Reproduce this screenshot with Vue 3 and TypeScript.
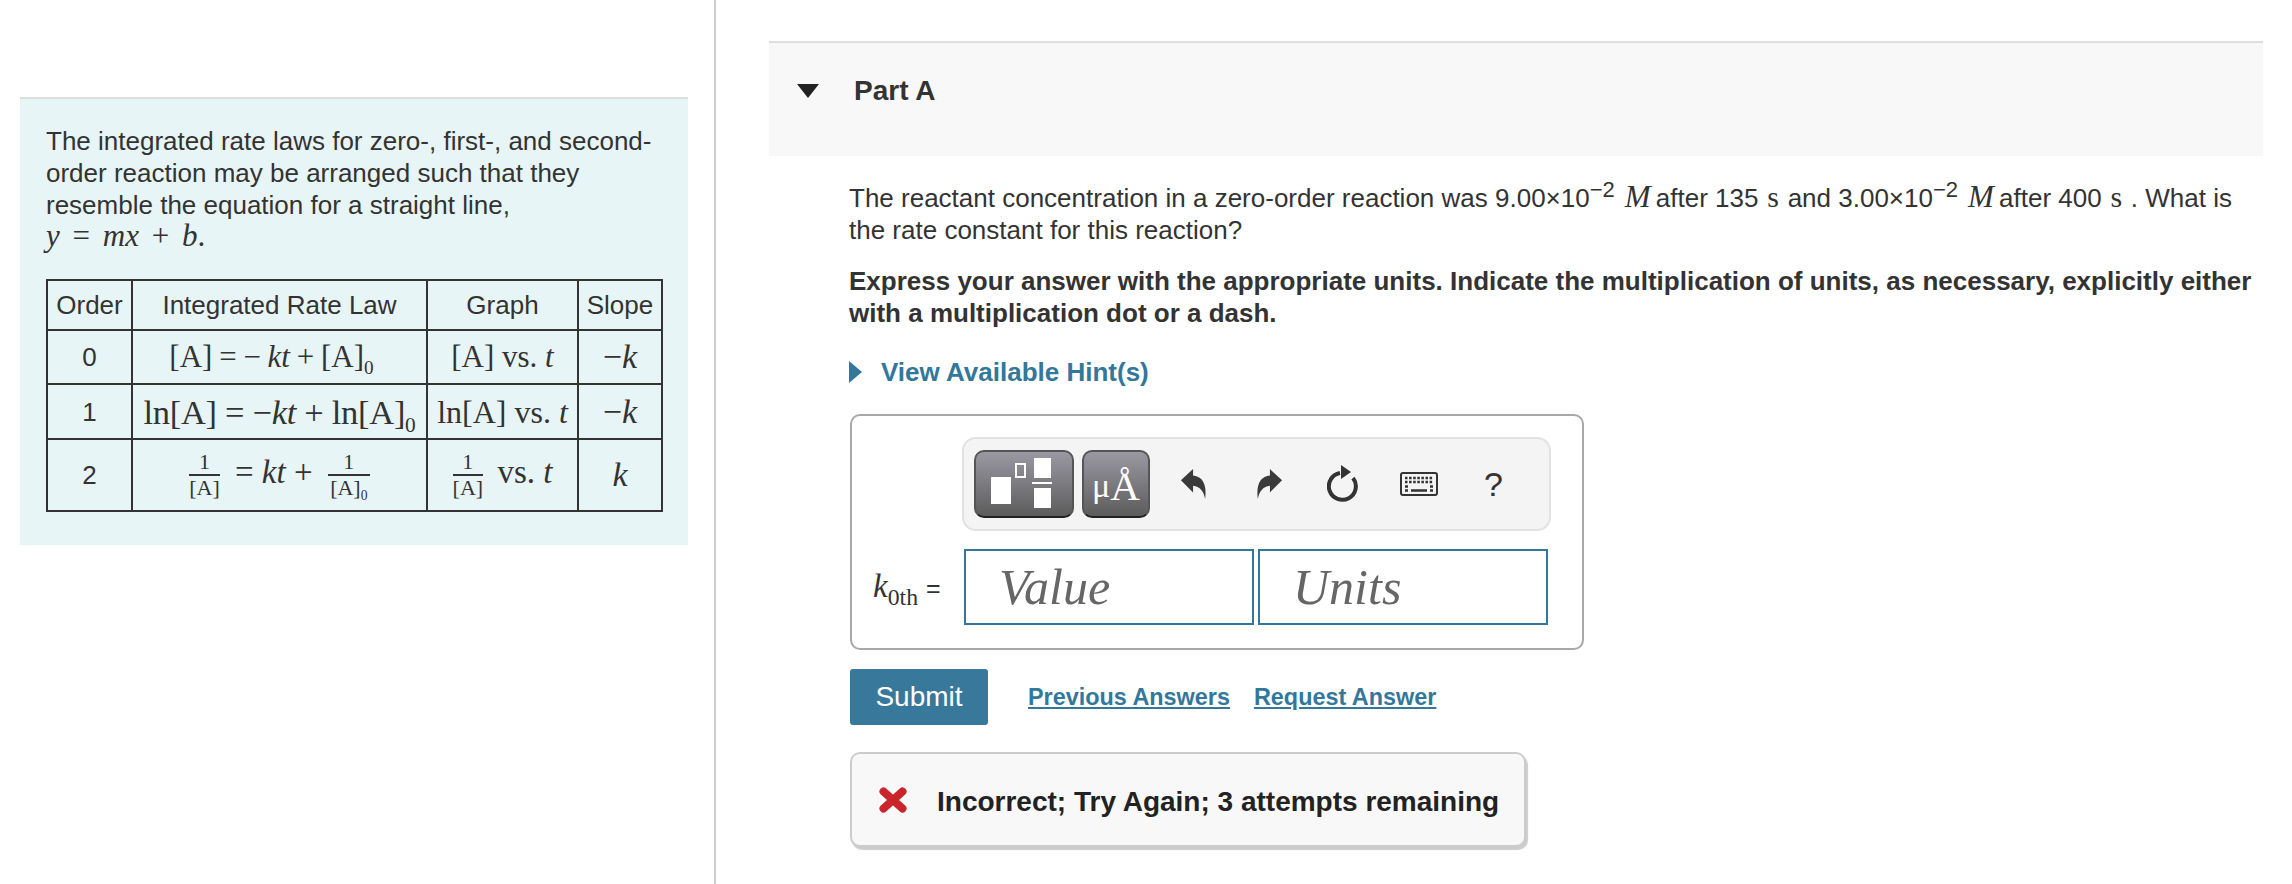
<script setup lang="ts">
const inputs = [
  { id: 'value', placeholder: 'Value' },
  { id: 'units', placeholder: 'Units' },
]
</script>

<template>
  <div class="page">
    <aside class="intro">
      <div class="intro-box">
        <p class="intro-text">
          The integrated rate laws for zero-, first-, and second-order reaction may be arranged such that they
          resemble the equation for a straight line,<br />
          <span class="m eq"><i>y</i> = <i>mx</i> + <i>b</i>.</span>
        </p>
        <table class="rates">
          <colgroup>
            <col class="c1" /><col class="c2" /><col class="c3" /><col class="c4" />
          </colgroup>
          <tbody>
            <tr class="r0">
              <td>Order</td><td>Integrated Rate Law</td><td>Graph</td><td>Slope</td>
            </tr>
            <tr class="r1">
              <td>0</td>
              <td class="m law-zero">[A] = − <i>kt</i> + [A]<sub>0</sub></td>
              <td class="m">[A] vs. <i>t</i></td>
              <td class="m slope">−<i>k</i></td>
            </tr>
            <tr class="r2">
              <td>1</td>
              <td class="m tight">ln[A] = −<i>kt</i> + ln[A]<sub>0</sub></td>
              <td class="m graph">ln[A] vs. <i>t</i></td>
              <td class="m slope">−<i>k</i></td>
            </tr>
            <tr class="r3">
              <td>2</td>
              <td class="m law-frac">
                <span class="frac"><span>1</span><span class="den">[A]</span></span>
                = <i>kt</i> +
                <span class="frac wide"><span>1</span><span class="den">[A]<sub>0</sub></span></span>
              </td>
              <td class="m graph-frac">
                <span class="frac"><span>1</span><span class="den">[A]</span></span>
                vs. <i>t</i>
              </td>
              <td class="m slope"><i>k</i></td>
            </tr>
          </tbody>
        </table>
      </div>
    </aside>

    <main class="main">
      <header class="part-head">
        <span class="caret-down"></span>
        <h2 class="part-title">Part A</h2>
      </header>

      <section class="part-body">
        <p class="question">
          The reactant concentration in a zero-order reaction was 9.00×10<sup>−2</sup><span class="m big"><i>M</i></span>
          after 135 <span class="m unit">s</span> and 3.00×10<sup>−2</sup><span class="m big"><i>M</i></span>
          after 400 <span class="m unit">s</span> . What is the rate constant for this reaction?
        </p>
        <p class="instruction">
          Express your answer with the appropriate units. Indicate the multiplication of units, as necessary,
          explicitly either with a multiplication dot or a dash.
        </p>
        <a class="hint"><span class="caret-right"></span>View Available Hint(s)</a>

        <div class="answer">
          <div class="toolbar">
            <button class="tool tool-frac" type="button" aria-label="Templates">
              <svg width="96" height="64" viewBox="1 2 96 64">
                <rect x="16" y="27" width="20" height="27" fill="#fff" />
                <rect x="41" y="14" width="9" height="13" fill="none" stroke="#fff" stroke-width="2" />
                <rect x="59" y="8" width="17" height="20" fill="#fff" />
                <rect x="57" y="32" width="20" height="2" fill="#fff" />
                <rect x="59" y="38" width="17" height="20" fill="#fff" />
              </svg>
            </button>
            <button class="tool tool-units" type="button"><span class="mu">μ</span>Å</button>
            <span class="icons">
              <svg width="28" height="34" viewBox="0 0 30 34" aria-label="Undo">
                <path d="M1 13 L14 1 V8 C24 9 29 17 27 33 C25 24 21 20 14 19 V26 Z" fill="#3a3a3a" />
              </svg>
              <svg width="28" height="34" viewBox="0 0 30 34" aria-label="Redo">
                <path d="M29 13 L16 1 V8 C6 9 1 17 3 33 C5 24 9 20 16 19 V26 Z" fill="#3a3a3a" />
              </svg>
              <svg width="34" height="38" viewBox="0 0 34 38" aria-label="Reset">
                <path d="M13 8 A13.5 13.5 0 1 0 26 13" fill="none" stroke="#333" stroke-width="4" />
                <path d="M14 0 L24 7 L14 14 Z" fill="#333" />
              </svg>
              <svg width="38" height="24" viewBox="0 0 38 24" aria-label="Keyboard">
                <rect x="1" y="1" width="36" height="22" rx="2" fill="none" stroke="#333" stroke-width="2" />
                <path d="M5 6 H33 M5 10 H33" stroke="#333" stroke-width="2.5" stroke-dasharray="2.5 1.6" />
                <path d="M5 14.5 H8 M30 14.5 H33 M5 18.5 H8 M11 18.5 H27 M30 18.5 H33" stroke="#333" stroke-width="2.5" />
              </svg>
              <span class="help">?</span>
            </span>
          </div>

          <div class="answer-row">
            <span class="answer-label">
              <span class="m"><i>k</i><sub>0th</sub></span><span class="equals">=</span>
            </span>
            <input
              v-for="item in inputs"
              :key="item.id"
              class="answer-input"
              type="text"
              :placeholder="item.placeholder"
            />
          </div>
        </div>

        <div class="actions">
          <button class="submit" type="button">Submit</button>
          <a class="link">Previous Answers</a>
          <a class="link">Request Answer</a>
        </div>

        <div class="feedback">
          <svg width="30" height="28" viewBox="0 0 30 28">
            <path d="M4 7 L23 24 M23 7 L4 24" transform="translate(1.5 -1.5)" stroke="#c9252b" stroke-width="8" stroke-linecap="round" />
          </svg>
          <strong>Incorrect; Try Again; 3 attempts remaining</strong>
        </div>
      </section>
    </main>
  </div>
</template>

<style>
html,
body {
  margin: 0;
  background: #fff;
}
</style>

<style scoped>
.page {
  display: flex;
  width: 2292px;
  height: 884px;
  overflow: hidden;
  font-family: "Liberation Sans", Arial, sans-serif;
  font-size: 26px;
  line-height: 32px;
  color: #333;
}

.m {
  font-family: "Liberation Serif", "Times New Roman", serif;
}

.intro {
  box-sizing: border-box;
  flex: 0 0 716px;
  padding: 97px 26px 0 20px;
  border-right: 2px solid #ccc;
}

.intro-box {
  box-sizing: border-box;
  height: 448px;
  padding: 26px 24px 0 26px;
  background: #e8f5f6;
  border-top: 2px solid #dcdfe0;
}

.intro-text {
  margin: 0;
}

.eq {
  font-size: 31px;
  line-height: 0;
  word-spacing: 5px;
}

.rates {
  margin-top: 26px;
  width: 615px;
  height: 232px;
  table-layout: fixed;
  border-collapse: collapse;
}

.c1 {
  width: 85px;
}

.c2 {
  width: 295px;
}

.c3 {
  width: 151px;
}

.c4 {
  width: 84px;
}

.rates td {
  padding: 0;
  border: 2px solid #333;
  text-align: center;
  white-space: nowrap;
}

.rates td.m {
  font-size: 31px;
}

.rates td.law-zero {
  padding-right: 16px;
  word-spacing: -1px;
}

.rates td.tight {
  font-size: 34.5px;
  letter-spacing: -0.3px;
}

.rates td.graph {
  font-size: 32px;
}

.rates td.slope {
  font-size: 34px;
}

.rates td.law-frac,
.rates td.graph-frac {
  font-size: 33px;
}

.law-frac .frac {
  margin: 0 7px;
}

.graph-frac .frac {
  margin-right: 6px;
}

.r0 {
  height: 50px;
}

.r1 {
  height: 54px;
}

.r2 {
  height: 55px;
}

.r3 {
  height: 72px;
}

sub {
  font-size: 62%;
  line-height: 0;
}

.frac {
  display: inline-flex;
  flex-direction: column;
  align-items: center;
  vertical-align: middle;
  min-width: 30px;
  font-size: 22px;
  line-height: 24px;
}

.frac.wide {
  min-width: 42px;
}

.den {
  align-self: stretch;
  border-top: 2px solid #333;
  text-align: center;
}

.main {
  flex: 1;
  box-sizing: border-box;
  padding: 41px 29px 0 53px;
}

.part-head {
  box-sizing: border-box;
  display: flex;
  gap: 35px;
  height: 115px;
  padding: 32px 0 0 28px;
  background: #f8f8f8;
  border-top: 2px solid #dedede;
}

.caret-down {
  width: 0;
  height: 0;
  margin-top: 9px;
  border-left: 11px solid transparent;
  border-right: 11px solid transparent;
  border-top: 14px solid #222;
}

.part-title {
  margin: 0;
  font-size: 28px;
  font-weight: 700;
}

.part-body {
  padding: 26px 0 0 80px;
}

.question,
.instruction {
  margin: 0;
}

.question sup {
  font-size: 22px;
  line-height: 0;
}

.big {
  margin: 0 -2px 0 10px;
  font-size: 31px;
  line-height: 0;
}

.unit {
  margin: 0 1.5px;
  font-size: 30px;
  line-height: 0;
}

.instruction {
  margin-top: 19px;
  font-weight: 700;
}

.hint {
  display: flex;
  align-items: center;
  margin-top: 27px;
  font-size: 26px;
  font-weight: 700;
  color: #33789b;
}

.caret-right {
  width: 0;
  height: 0;
  margin-right: 19px;
  border-top: 11px solid transparent;
  border-bottom: 11px solid transparent;
  border-left: 13px solid #33789b;
}

.answer {
  box-sizing: border-box;
  width: 734px;
  height: 236px;
  margin: 26px 0 0 1px;
  padding: 21px 32px 0 110px;
  background: #fff;
  border: 2px solid #a8a8a8;
  border-radius: 10px;
}

.toolbar {
  box-sizing: border-box;
  display: flex;
  align-items: center;
  width: 589px;
  height: 94px;
  padding: 0 0 0 10px;
  background: #f4f4f4;
  border: 2px solid #e2e2e2;
  border-radius: 14px;
}

.tool {
  box-sizing: border-box;
  display: flex;
  align-items: center;
  justify-content: center;
  height: 68px;
  padding: 0;
  color: #fff;
  background: linear-gradient(#9a99a3, #5c5c5c);
  border: 2px solid #555;
  border-bottom-color: #222;
  border-radius: 10px;
}

.tool-frac {
  width: 100px;
}

.tool-units {
  width: 68px;
  margin-left: 8px;
  padding-top: 4px;
  font-family: "Liberation Serif", serif;
  font-size: 41px;
}

.mu {
  font-size: 34px;
}

.icons {
  display: grid;
  grid-template-columns: repeat(5, 75px);
  justify-items: center;
  align-items: center;
  margin-left: 6px;
}

.help {
  font-size: 34px;
}

.answer-row {
  display: flex;
  align-items: center;
  gap: 4px;
  margin-top: 18px;
  margin-left: -97px;
}

.answer-label {
  box-sizing: border-box;
  width: 95px;
  padding-left: 8px;
  font-size: 26px;
  white-space: nowrap;
}

.answer-label .m {
  font-size: 33px;
}

.answer-label sub {
  font-size: 72%;
}

.equals {
  margin-left: 8px;
  font-size: 25px;
}

.answer-input {
  box-sizing: border-box;
  width: 290px;
  height: 76px;
  padding: 0 0 0 33px;
  font-family: "Liberation Serif", serif;
  font-size: 50px;
  font-style: italic;
  background: #fff;
  border: 2px solid #33789b;
  outline: none;
}

.answer-input::placeholder {
  color: #666;
  opacity: 1;
}

.actions {
  display: flex;
  align-items: center;
  margin: 19px 0 0 1px;
}

.submit {
  width: 138px;
  height: 56px;
  padding: 0;
  margin-right: 40px;
  font-family: inherit;
  font-size: 28px;
  color: #fff;
  background: #37789b;
  border: none;
  border-radius: 3px;
}

.link {
  margin-right: 24px;
  font-size: 23.4px;
  font-weight: 700;
  color: #33789b;
  text-decoration: underline;
}

.feedback {
  box-sizing: border-box;
  display: flex;
  align-items: center;
  gap: 29px;
  width: 676px;
  height: 95px;
  margin: 27px 0 0 1px;
  padding-left: 26px;
  background: #f8f8f8;
  border: 2px solid #ccc;
  border-radius: 10px;
  box-shadow: 2px 3px 1px #ccc;
}

.feedback strong {
  margin-top: 5px;
  font-size: 28px;
  color: #222;
}
</style>
